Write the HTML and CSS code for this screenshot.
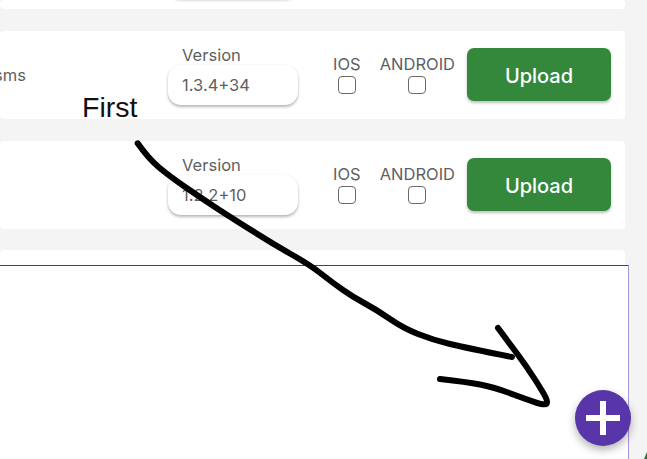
FILE: index.html
```html
<!DOCTYPE html>
<html lang="en">
<head>
<meta charset="utf-8">
<title>Versions</title>
<link rel="stylesheet" href="styles.css">
</head>
<body>
<main class="list">
  <section class="card stub">
    <div class="field stub-field"></div>
  </section>
  <section class="card row">
    <div class="desc">sms</div>
    <div class="version"><span class="label">Version</span><div class="field">1.3.4+34</div></div>
    <div class="platform"><span>IOS</span><i class="check"></i></div>
    <div class="platform"><span>ANDROID</span><i class="check"></i></div>
    <button class="upload">Upload</button>
  </section>
  <section class="card row">
    <div class="desc"></div>
    <div class="version"><span class="label">Version</span><div class="field">1.2.2+10</div></div>
    <div class="platform"><span>IOS</span><i class="check"></i></div>
    <div class="platform"><span>ANDROID</span><i class="check"></i></div>
    <button class="upload">Upload</button>
  </section>
  <section class="card canvas-card">
    <div class="canvas"></div>
  </section>
</main>
<div class="first">First</div>
<svg class="scribble" viewBox="0 0 647 459" width="647" height="459" aria-hidden="true">
  <path d="M137.700 143.300Q148.300 158.300 158.200 166.700Q168 175 184.800 186.700Q201.700 198.300 218.300 209.200Q235 220 255 232.500Q275 245 292.500 255Q310 265 321.500 274Q333 283 343 290Q353 297 365 303.500Q377 310 390 319Q403 328 418 334Q433 340 450 344Q467 348 512 357"/>
  <path d="M498 328Q507 340 517 353.500Q527 367 535 379.500Q543 392 545.500 397Q548 402 546.500 403.800Q545 405.700 534 401.800Q523 398 508 392.500Q493 387 480 384.500Q467 382 440 379"/>
</svg>
<button class="fab" aria-label="Add">
  <svg viewBox="0 0 34 34" width="34" height="34"><path d="M17 0V34M0 17H34"/></svg>
</button>
<div class="corner"></div>
</body>
</html>
```
FILE: styles.css
```css
html, body {
  margin: 0;
  height: 459px;
  overflow: hidden;
  background: #f4f4f4;
}

body {
  position: relative;
  font-family: Inter, "Liberation Sans", sans-serif;
  color: #5f5f5f;
}

.list {
  width: 625px;
  display: flex;
  flex-direction: column;
  gap: 22.2px;
}

.card {
  background: #fff;
  border-radius: 4px;
}

.stub {
  height: 8.600px;
  flex: none;
  padding-left: 168px;
}

.stub-field {
  width: 130px;
  box-sizing: border-box;
  margin-top: -42px;
}

.row {
  height: 87.8px;
  display: flex;
  align-items: center;
  padding-right: 14px;
  box-sizing: border-box;
  flex: none;
}

.desc {
  flex: 1;
  margin-left: -6px;
  font-size: 16.500px;
}

.version {
  width: 130px;
  margin-right: 35px;
  margin-top: 2px;
}

.label {
  display: block;
  margin-left: 14px;
  margin-top: -1px;
  margin-bottom: 1px;
  font-size: 16.500px;
  line-height: 18px;
}

.field {
  height: 40px;
  padding-left: 14px;
  border-radius: 13px;
  background: #fff;
  box-shadow: 0 2px 3px rgba(0, 0, 0, 0.28), 0 0 2px rgba(0, 0, 0, 0.06);
  font-size: 16.500px;
  line-height: 40px;
}

.platform {
  display: flex;
  flex-direction: column;
  align-items: center;
  margin-right: 19px;
  font-size: 16.500px;
  line-height: 18px;
  gap: 3px;
  margin-top: -1px;
}

.platform:nth-of-type(4) {
  margin-right: 12px;
}

.check {
  width: 18px;
  height: 18px;
  box-sizing: border-box;
  border: 1.5px solid #6a6a6a;
  border-radius: 4px;
}

.upload {
  width: 144px;
  height: 53px;
  border: 0;
  border-radius: 7px;
  background: #33883c;
  color: #fff;
  font: 500 20px/24px Inter, "Liberation Sans", sans-serif;
  padding: 3px 0 0;
  box-shadow: 0 2px 3px rgba(0, 0, 0, 0.25);
}

.canvas-card {
  margin-top: -0.4px;
  padding-top: 14.800px;
  height: 300px;
  flex: none;
}

.canvas {
  height: 100%;
  margin-right: -4px;
  background: #fff;
  border-top: 1px solid #4a3490;
  border-right: 1.500px solid #a996d9;
}

.first {
  position: absolute;
  left: 82px;
  top: 91px;
  font: 28.500px/32px "Liberation Sans", sans-serif;
  color: #111;
}

.scribble {
  position: absolute;
  left: 0;
  top: 0;
  pointer-events: none;
}

.scribble path {
  fill: none;
  stroke: #000;
  stroke-width: 6px;
  stroke-linecap: round;
  stroke-linejoin: round;
}

.fab {
  position: absolute;
  left: 575px;
  top: 390px;
  width: 56px;
  height: 56px;
  padding: 11px;
  border: 0;
  border-radius: 50%;
  background: #5835a8;
  box-shadow: 0 4px 8px rgba(0, 0, 0, 0.3);
}

.fab svg {
  display: block;
}

.fab path {
  fill: none;
  stroke: #fff;
  stroke-width: 6px;
}

.corner {
  position: absolute;
  left: 644px;
  top: 452px;
  width: 3px;
  height: 7px;
  background: #2f6f35;
  clip-path: polygon(100% 0, 100% 100%, 0 100%);
}
```
